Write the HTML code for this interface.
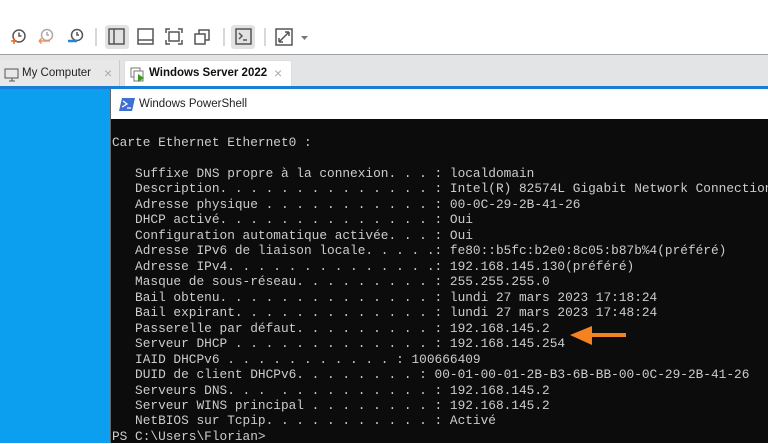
<!DOCTYPE html>
<html><head><style>
body{margin:0;width:768px;height:443px;overflow:hidden;background:#fff;position:relative;font-family:"Liberation Sans",sans-serif}
.a{position:absolute}
pre{margin:0;font-family:"Liberation Mono",monospace;font-size:12.8px;line-height:15.47px;color:#cccccc;white-space:pre}
</style></head><body>
<div class="a" style="left:0;top:54px;width:768px;height:1px;background:#a0a0a0"></div>
<div class="a" style="left:0;top:55px;width:768px;height:31px;background:#e3e4e6"></div>
<!-- toolbar -->
<svg class="a" style="left:0;top:20px" width="320" height="34">
<g fill="none" stroke-width="1.5">
<circle cx="19" cy="16" r="6" stroke="#555"/><path d="M19 12.5v3.5h2.5" stroke="#555"/><path d="M11 21h6M14 18v6" stroke="#e8682a"/>
<circle cx="47" cy="15" r="5.5" stroke="#aaa"/><path d="M47 12v3h2" stroke="#aaa"/><path d="M39 21h11M39 21l2.5-2.5M39 21l2.5 2.5" stroke="#f09060"/>
<circle cx="77" cy="15" r="5.5" stroke="#555"/><path d="M77 12v3h2" stroke="#555"/><path d="M68 21h9" stroke="#2b82d0" stroke-width="2.5"/>
<path d="M96 8v18M224 8v18M265 8v18" stroke="#ccc"/>
<rect x="105" y="5" width="24" height="24" rx="3" fill="#e2e2e2" stroke="none"/>
<rect x="109" y="9" width="15" height="15" stroke="#555"/><path d="M114 9v15" stroke="#555"/>
<rect x="138" y="9" width="15" height="15" stroke="#555"/><path d="M138 20h15" stroke="#555"/>
<path d="M166 13v-4h4M178 9h4v4M182 20v4h-4M170 24h-4v-4" stroke="#555"/><rect x="169" y="12" width="10" height="9" stroke="#555"/>
<rect x="195" y="14" width="10" height="10" stroke="#555"/><path d="M199 14v-4h10v10h-4" stroke="#555"/>
<rect x="231" y="5" width="24" height="24" rx="3" fill="#e2e2e2" stroke="none"/>
<rect x="236" y="9" width="15" height="15" stroke="#555"/><path d="M239 13l3 3-3 3M243 20h4" stroke="#555"/>
<rect x="276" y="9" width="16" height="16" stroke="#555"/><path d="M279 22l10-10M279 22v-4M279 22h4M289 12h-4M289 12v4" stroke="#555"/>
</g><path d="M301 16h7l-3.5 4z" fill="#777"/>
</svg>
<!-- tabs -->
<div class="a" style="left:0;top:60px;width:119px;height:26px;background:#e8e8e9;border-right:1px solid #ccc"></div>
<svg class="a" style="left:4px;top:68px" width="16" height="14"><rect x="1" y="1" width="13" height="9" fill="none" stroke="#555"/><path d="M5 13h6M8 10v3" stroke="#555"/></svg>
<div class="a" style="left:22px;top:67px;font-size:11.5px;color:#222">My Computer</div>
<div class="a" style="left:104px;top:65px;font-size:14px;color:#aaa">×</div>
<div class="a" style="left:124px;top:60px;width:166px;height:27px;background:#fff;border:1px solid #ddd;border-bottom:none;border-radius:3px 3px 0 0"></div>
<svg class="a" style="left:130px;top:67px" width="16" height="16"><rect x="1" y="1" width="9" height="9" fill="none" stroke="#777"/><rect x="4" y="4" width="9" height="10" fill="#fff" stroke="#777"/><path d="M8 7v8l6-4z" fill="#3a9a20"/></svg>
<div class="a" style="left:149px;top:67px;font-size:11.5px;font-weight:bold;color:#111">Windows Server 2022</div>
<div class="a" style="left:274px;top:65px;font-size:14px;color:#aaa">×</div>
<!-- desktop -->
<div class="a" style="left:0;top:86px;width:768px;height:3px;background:#1a7fd4"></div>
<div class="a" style="left:0;top:89px;width:111px;height:354px;background:#0c9ff0"></div>
<div class="a" style="left:110px;top:89px;width:658px;height:30px;background:#fff;border-left:1px solid #666"></div>
<svg class="a" style="left:119px;top:98px" width="16" height="13"><path d="M3 0h13l-3 13H0z" fill="#3f6fd0"/><path d="M4 3l4 3-5 3M8 10h4" stroke="#fff" stroke-width="1.3" fill="none"/></svg>
<div class="a" style="left:139px;top:98px;font-size:11.5px;color:#222">Windows PowerShell</div>
<div class="a" style="left:110px;top:119px;width:658px;height:324px;background:#0c0c0c;border-left:1px solid #666"></div>
<pre class="a" style="left:112px;top:135px">Carte Ethernet Ethernet0 :

   Suffixe DNS propre à la connexion. . . : localdomain
   Description. . . . . . . . . . . . . . : Intel(R) 82574L Gigabit Network Connection
   Adresse physique . . . . . . . . . . . : 00-0C-29-2B-41-26
   DHCP activé. . . . . . . . . . . . . . : Oui
   Configuration automatique activée. . . : Oui
   Adresse IPv6 de liaison locale. . . . .: fe80::b5fc:b2e0:8c05:b87b%4(préféré)
   Adresse IPv4. . . . . . . . . . . . . .: 192.168.145.130(préféré)
   Masque de sous-réseau. . . . . . . . . : 255.255.255.0
   Bail obtenu. . . . . . . . . . . . . . : lundi 27 mars 2023 17:18:24
   Bail expirant. . . . . . . . . . . . . : lundi 27 mars 2023 17:48:24
   Passerelle par défaut. . . . . . . . . : 192.168.145.2
   Serveur DHCP . . . . . . . . . . . . . : 192.168.145.254
   IAID DHCPv6 . . . . . . . . . . . : 100666409
   DUID de client DHCPv6. . . . . . . . : 00-01-00-01-2B-B3-6B-BB-00-0C-29-2B-41-26
   Serveurs DNS. . .  . . . . . . . . . . : 192.168.145.2
   Serveur WINS principal . . . . . . . . : 192.168.145.2
   NetBIOS sur Tcpip. . . . . . . . . . . : Activé
PS C:\Users\Florian&gt;</pre>
<svg class="a" style="left:568px;top:325px" width="62" height="22"><path d="M2 10L24 1v7h34v4H24v8z" fill="#f58220"/></svg>
</body></html>
